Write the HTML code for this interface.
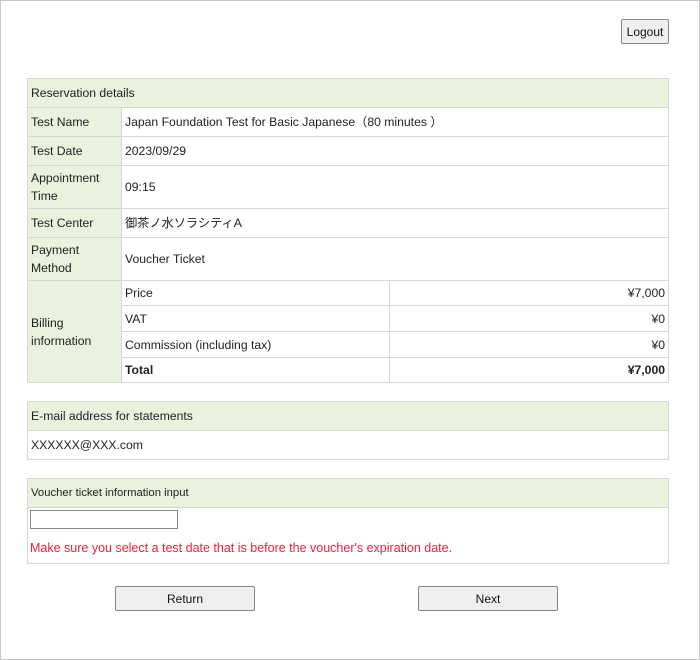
<!DOCTYPE html>
<html><head><meta charset="utf-8"><style>
*{margin:0;padding:0;box-sizing:border-box}
html,body{width:700px;height:660px;background:#fff;overflow:hidden}
body{font-family:"Liberation Sans","Noto Sans CJK JP",sans-serif;font-size:12.2px;color:#222;position:relative}
.frame{position:absolute;left:0;top:0;width:700px;height:660px;border:1px solid #c8c8c8}
.c{position:absolute;border:1px solid #d6d6d6;display:flex;align-items:center;padding-left:3px;line-height:18px}
.g{background:#e9f2dc}
.r{justify-content:flex-end;padding-right:3px}
.btn{position:absolute;border:1px solid #888;background:#efefef;border-radius:2px;display:flex;align-items:center;justify-content:center;font-size:12px;color:#111}
</style></head><body>
<div class="frame"></div>
<div class="btn" style="left:621px;top:19px;width:48px;height:25px">Logout</div>

<div class="c g" style="left:27px;top:78px;width:642px;height:30px">Reservation details</div>
<div class="c g" style="left:27px;top:107px;width:95px;height:30px">Test Name</div>
<div class="c" style="left:121px;top:107px;width:548px;height:30px">Japan Foundation Test for Basic Japanese（80 minutes ）</div>
<div class="c g" style="left:27px;top:136px;width:95px;height:30px">Test Date</div>
<div class="c" style="left:121px;top:136px;width:548px;height:30px">2023/09/29</div>
<div class="c g" style="left:27px;top:165px;width:95px;height:44px">Appointment<br>Time</div>
<div class="c" style="left:121px;top:165px;width:548px;height:44px">09:15</div>
<div class="c g" style="left:27px;top:208px;width:95px;height:30px">Test Center</div>
<div class="c" style="left:121px;top:208px;width:548px;height:30px">御茶ノ水ソラシティA</div>
<div class="c g" style="left:27px;top:237px;width:95px;height:44px">Payment<br>Method</div>
<div class="c" style="left:121px;top:237px;width:548px;height:44px">Voucher Ticket</div>
<div class="c g" style="left:27px;top:280px;width:95px;height:103px">Billing<br>information</div>
<div class="c" style="left:121px;top:280px;width:269px;height:26px">Price</div>
<div class="c r" style="left:389px;top:280px;width:280px;height:26px">¥7,000</div>
<div class="c" style="left:121px;top:305px;width:269px;height:27px">VAT</div>
<div class="c r" style="left:389px;top:305px;width:280px;height:27px">¥0</div>
<div class="c" style="left:121px;top:331px;width:269px;height:27px">Commission (including tax)</div>
<div class="c r" style="left:389px;top:331px;width:280px;height:27px">¥0</div>
<div class="c" style="left:121px;top:357px;width:269px;height:26px;font-weight:bold">Total</div>
<div class="c r" style="left:389px;top:357px;width:280px;height:26px;font-weight:bold">¥7,000</div>

<div class="c g" style="left:27px;top:401px;width:642px;height:30px">E-mail address for statements</div>
<div class="c" style="left:27px;top:430px;width:642px;height:30px">XXXXXX@XXX.com</div>

<div class="c g" style="left:27px;top:478px;width:642px;height:30px;font-size:11.3px">Voucher ticket information input</div>
<div class="c" style="left:27px;top:507px;width:642px;height:57px"></div>
<div style="position:absolute;left:30px;top:510px;width:148px;height:19px;border:1px solid #888;background:#fff"></div>
<div style="position:absolute;left:30px;top:541px;color:#f0203c;font-size:12.5px">Make sure you select a test date that is before the voucher's expiration date.</div>

<div class="btn" style="left:115px;top:586px;width:140px;height:25px">Return</div>
<div class="btn" style="left:418px;top:586px;width:140px;height:25px">Next</div>
</body></html>
